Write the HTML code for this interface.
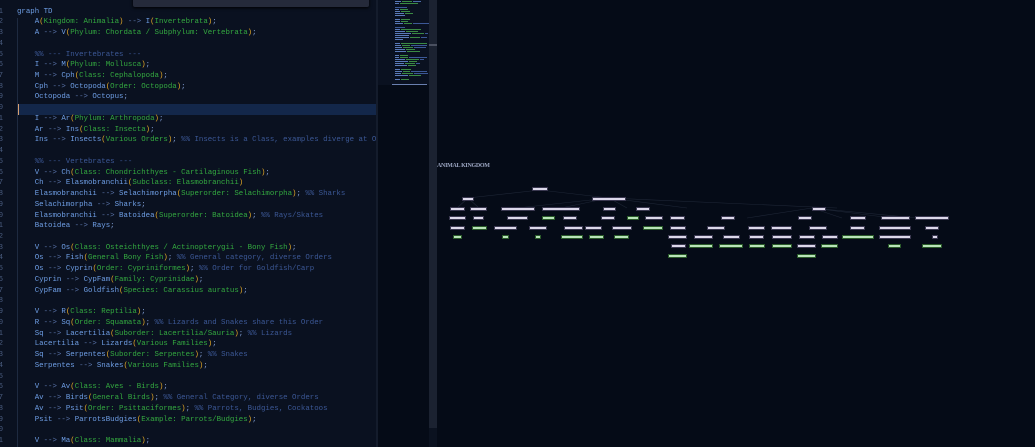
<!DOCTYPE html>
<html><head><meta charset="utf-8"><style>
*{margin:0;padding:0;box-sizing:border-box}
body{width:1035px;height:447px;overflow:hidden;background:#050b17;position:relative;font-family:"Liberation Mono",monospace}
#ed{position:absolute;left:0;top:0;width:376px;height:447px;background:#0a1120;overflow:hidden}
#hl{position:absolute;left:17px;top:104px;width:359px;height:10.5px;background:#13274a}
#cur{position:absolute;left:17px;top:104px;width:2px;height:10.5px;background:#d9a070}
#guide{position:absolute;left:17px;top:18px;width:1px;height:429px;background:#1e2a40}
.ln{position:absolute;left:-13px;width:16px;text-align:right;font-size:7.33px;color:#4b5d80;line-height:10.73px}
.code{position:absolute;left:17px;top:6.6px;font-size:7.4px;line-height:10.73px;white-space:pre;color:#7fa3dd}
.i{color:#6f9fe6}.a{color:#5c76ad}.p{color:#e4a826}.g{color:#34aa40}.c{color:#3c5896}.t{color:#7f9bd0}
#bd{position:absolute;left:376px;top:0;width:2px;height:447px;background:#141c2c}
#mm{position:absolute;left:378px;top:0;width:51px;height:447px;background:#050b17}
#sb{position:absolute;left:429px;top:0;width:8px;height:447px;background:#1b2231}
#sb2{position:absolute;left:429px;top:428px;width:8px;height:19px;background:#0b1220}
#find{position:absolute;left:133px;top:-4px;width:236px;height:11px;background:#252a3a;border-radius:2px;box-shadow:0 1px 3px #000}
.mr{position:absolute;left:14px;height:1px;display:flex;gap:1px}
.mr b{display:block;height:1px}
.n{position:absolute;height:4px;background:#dcd8ea;border:0.5px solid #3a3850}
.n.gr{background:#b8e4b8;border-color:#2a5a2a}
</style></head><body>
<div id="ed">
<div id="hl"></div><div id="cur"></div><div id="guide"></div>
<div class="ln" style="top:6.6px">1<br>2<br>3<br>4<br>5<br>6<br>7<br>8<br>9<br>0<br>1<br>2<br>3<br>4<br>5<br>6<br>7<br>8<br>9<br>0<br>1<br>2<br>3<br>4<br>5<br>6<br>7<br>8<br>9<br>0<br>1<br>2<br>3<br>4<br>5<br>6<br>7<br>8<br>9<br>0<br>1</div>
<div class="code"><span class="i">graph TD</span>
    <span class="i">A</span><span class="p">(</span><span class="g">Kingdom: Animalia</span><span class="p">)</span> <span class="a">--&gt;</span> <span class="i">I</span><span class="p">(</span><span class="g">Invertebrata</span><span class="p">)</span><span class="t">;</span>
    <span class="i">A</span> <span class="a">--&gt;</span> <span class="i">V</span><span class="p">(</span><span class="g">Phylum: Chordata / Subphylum: Vertebrata</span><span class="p">)</span><span class="t">;</span>

    <span class="c">%% --- Invertebrates ---</span>
    <span class="i">I</span> <span class="a">--&gt;</span> <span class="i">M</span><span class="p">(</span><span class="g">Phylum: Mollusca</span><span class="p">)</span><span class="t">;</span>
    <span class="i">M</span> <span class="a">--&gt;</span> <span class="i">Cph</span><span class="p">(</span><span class="g">Class: Cephalopoda</span><span class="p">)</span><span class="t">;</span>
    <span class="i">Cph</span> <span class="a">--&gt;</span> <span class="i">Octopoda</span><span class="p">(</span><span class="g">Order: Octopoda</span><span class="p">)</span><span class="t">;</span>
    <span class="i">Octopoda</span> <span class="a">--&gt;</span> <span class="i">Octopus</span><span class="t">;</span>

    <span class="i">I</span> <span class="a">--&gt;</span> <span class="i">Ar</span><span class="p">(</span><span class="g">Phylum: Arthropoda</span><span class="p">)</span><span class="t">;</span>
    <span class="i">Ar</span> <span class="a">--&gt;</span> <span class="i">Ins</span><span class="p">(</span><span class="g">Class: Insecta</span><span class="p">)</span><span class="t">;</span>
    <span class="i">Ins</span> <span class="a">--&gt;</span> <span class="i">Insects</span><span class="p">(</span><span class="g">Various Orders</span><span class="p">)</span><span class="t">;</span> <span class="c">%% Insects is a Class, examples diverge at Orders</span>

    <span class="c">%% --- Vertebrates ---</span>
    <span class="i">V</span> <span class="a">--&gt;</span> <span class="i">Ch</span><span class="p">(</span><span class="g">Class: Chondrichthyes - Cartilaginous Fish</span><span class="p">)</span><span class="t">;</span>
    <span class="i">Ch</span> <span class="a">--&gt;</span> <span class="i">Elasmobranchii</span><span class="p">(</span><span class="g">Subclass: Elasmobranchii</span><span class="p">)</span>
    <span class="i">Elasmobranchii</span> <span class="a">--&gt;</span> <span class="i">Selachimorpha</span><span class="p">(</span><span class="g">Superorder: Selachimorpha</span><span class="p">)</span><span class="t">;</span> <span class="c">%% Sharks</span>
    <span class="i">Selachimorpha</span> <span class="a">--&gt;</span> <span class="i">Sharks</span><span class="t">;</span>
    <span class="i">Elasmobranchii</span> <span class="a">--&gt;</span> <span class="i">Batoidea</span><span class="p">(</span><span class="g">Superorder: Batoidea</span><span class="p">)</span><span class="t">;</span> <span class="c">%% Rays/Skates</span>
    <span class="i">Batoidea</span> <span class="a">--&gt;</span> <span class="i">Rays</span><span class="t">;</span>

    <span class="i">V</span> <span class="a">--&gt;</span> <span class="i">Os</span><span class="p">(</span><span class="g">Class: Osteichthyes / Actinopterygii - Bony Fish</span><span class="p">)</span><span class="t">;</span>
    <span class="i">Os</span> <span class="a">--&gt;</span> <span class="i">Fish</span><span class="p">(</span><span class="g">General Bony Fish</span><span class="p">)</span><span class="t">;</span> <span class="c">%% General category, diverse Orders</span>
    <span class="i">Os</span> <span class="a">--&gt;</span> <span class="i">Cyprin</span><span class="p">(</span><span class="g">Order: Cypriniformes</span><span class="p">)</span><span class="t">;</span> <span class="c">%% Order for Goldfish/Carp</span>
    <span class="i">Cyprin</span> <span class="a">--&gt;</span> <span class="i">CypFam</span><span class="p">(</span><span class="g">Family: Cyprinidae</span><span class="p">)</span><span class="t">;</span>
    <span class="i">CypFam</span> <span class="a">--&gt;</span> <span class="i">Goldfish</span><span class="p">(</span><span class="g">Species: Carassius auratus</span><span class="p">)</span><span class="t">;</span>

    <span class="i">V</span> <span class="a">--&gt;</span> <span class="i">R</span><span class="p">(</span><span class="g">Class: Reptilia</span><span class="p">)</span><span class="t">;</span>
    <span class="i">R</span> <span class="a">--&gt;</span> <span class="i">Sq</span><span class="p">(</span><span class="g">Order: Squamata</span><span class="p">)</span><span class="t">;</span> <span class="c">%% Lizards and Snakes share this Order</span>
    <span class="i">Sq</span> <span class="a">--&gt;</span> <span class="i">Lacertilia</span><span class="p">(</span><span class="g">Suborder: Lacertilia/Sauria</span><span class="p">)</span><span class="t">;</span> <span class="c">%% Lizards</span>
    <span class="i">Lacertilia</span> <span class="a">--&gt;</span> <span class="i">Lizards</span><span class="p">(</span><span class="g">Various Families</span><span class="p">)</span><span class="t">;</span>
    <span class="i">Sq</span> <span class="a">--&gt;</span> <span class="i">Serpentes</span><span class="p">(</span><span class="g">Suborder: Serpentes</span><span class="p">)</span><span class="t">;</span> <span class="c">%% Snakes</span>
    <span class="i">Serpentes</span> <span class="a">--&gt;</span> <span class="i">Snakes</span><span class="p">(</span><span class="g">Various Families</span><span class="p">)</span><span class="t">;</span>

    <span class="i">V</span> <span class="a">--&gt;</span> <span class="i">Av</span><span class="p">(</span><span class="g">Class: Aves - Birds</span><span class="p">)</span><span class="t">;</span>
    <span class="i">Av</span> <span class="a">--&gt;</span> <span class="i">Birds</span><span class="p">(</span><span class="g">General Birds</span><span class="p">)</span><span class="t">;</span> <span class="c">%% General Category, diverse Orders</span>
    <span class="i">Av</span> <span class="a">--&gt;</span> <span class="i">Psit</span><span class="p">(</span><span class="g">Order: Psittaciformes</span><span class="p">)</span><span class="t">;</span> <span class="c">%% Parrots, Budgies, Cockatoos</span>
    <span class="i">Psit</span> <span class="a">--&gt;</span> <span class="i">ParrotsBudgies</span><span class="p">(</span><span class="g">Example: Parrots/Budgies</span><span class="p">)</span><span class="t">;</span>

    <span class="i">V</span> <span class="a">--&gt;</span> <span class="i">Ma</span><span class="p">(</span><span class="g">Class: Mammalia</span><span class="p">)</span><span class="t">;</span></div>
</div>
<div id="find"></div>
<div id="bd"></div>
<div id="mm">
<div style="position:absolute;left:0;top:0;width:51px;height:85px;background:#0a1120"></div>
<div class="mr" style="top:1px;left:17px"><b style="width:6px;background:#5a7ab8"></b><b style="width:10px;background:#3a8a44"></b><b style="width:8px;background:#4a6aa8"></b></div>
<div class="mr" style="top:3px;left:17px"><b style="width:4px;background:#5a7ab8"></b><b style="width:18px;background:#3a8a44"></b></div>
<div class="mr" style="top:7px;left:17px"><b style="width:12px;background:#3c5896"></b></div>
<div class="mr" style="top:9px;left:17px"><b style="width:4px;background:#5a7ab8"></b><b style="width:8px;background:#3a8a44"></b></div>
<div class="mr" style="top:11px;left:17px"><b style="width:5px;background:#5a7ab8"></b><b style="width:9px;background:#3a8a44"></b></div>
<div class="mr" style="top:13px;left:17px"><b style="width:9px;background:#5a7ab8"></b><b style="width:8px;background:#3a8a44"></b></div>
<div class="mr" style="top:15px;left:17px"><b style="width:10px;background:#5a7ab8"></b></div>
<div class="mr" style="top:19px;left:17px"><b style="width:5px;background:#5a7ab8"></b><b style="width:9px;background:#3a8a44"></b></div>
<div class="mr" style="top:21px;left:17px"><b style="width:5px;background:#5a7ab8"></b><b style="width:7px;background:#3a8a44"></b></div>
<div class="mr" style="top:23px;left:17px"><b style="width:8px;background:#5a7ab8"></b><b style="width:8px;background:#3a8a44"></b><b style="width:17px;background:#3c5896"></b></div>
<div class="mr" style="top:27px;left:17px"><b style="width:10px;background:#3c5896"></b></div>
<div class="mr" style="top:29px;left:17px"><b style="width:5px;background:#5a7ab8"></b><b style="width:20px;background:#3a8a44"></b></div>
<div class="mr" style="top:31px;left:17px"><b style="width:10px;background:#5a7ab8"></b><b style="width:12px;background:#3a8a44"></b></div>
<div class="mr" style="top:33px;left:17px"><b style="width:16px;background:#5a7ab8"></b><b style="width:12px;background:#3a8a44"></b><b style="width:3px;background:#3c5896"></b></div>
<div class="mr" style="top:35px;left:17px"><b style="width:14px;background:#5a7ab8"></b></div>
<div class="mr" style="top:37px;left:17px"><b style="width:14px;background:#5a7ab8"></b><b style="width:10px;background:#3a8a44"></b><b style="width:6px;background:#3c5896"></b></div>
<div class="mr" style="top:39px;left:17px"><b style="width:8px;background:#5a7ab8"></b></div>
<div class="mr" style="top:43px;left:17px"><b style="width:5px;background:#5a7ab8"></b><b style="width:26px;background:#3a8a44"></b></div>
<div class="mr" style="top:45px;left:17px"><b style="width:6px;background:#5a7ab8"></b><b style="width:8px;background:#3a8a44"></b><b style="width:16px;background:#3c5896"></b></div>
<div class="mr" style="top:47px;left:17px"><b style="width:7px;background:#5a7ab8"></b><b style="width:10px;background:#3a8a44"></b><b style="width:12px;background:#3c5896"></b></div>
<div class="mr" style="top:49px;left:17px"><b style="width:10px;background:#5a7ab8"></b><b style="width:9px;background:#3a8a44"></b></div>
<div class="mr" style="top:51px;left:17px"><b style="width:11px;background:#5a7ab8"></b><b style="width:13px;background:#3a8a44"></b></div>
<div class="mr" style="top:55px;left:17px"><b style="width:4px;background:#5a7ab8"></b><b style="width:8px;background:#3a8a44"></b></div>
<div class="mr" style="top:57px;left:17px"><b style="width:4px;background:#5a7ab8"></b><b style="width:8px;background:#3a8a44"></b><b style="width:18px;background:#3c5896"></b></div>
<div class="mr" style="top:59px;left:17px"><b style="width:10px;background:#5a7ab8"></b><b style="width:13px;background:#3a8a44"></b><b style="width:4px;background:#3c5896"></b></div>
<div class="mr" style="top:61px;left:17px"><b style="width:13px;background:#5a7ab8"></b><b style="width:8px;background:#3a8a44"></b></div>
<div class="mr" style="top:63px;left:17px"><b style="width:9px;background:#5a7ab8"></b><b style="width:10px;background:#3a8a44"></b><b style="width:4px;background:#3c5896"></b></div>
<div class="mr" style="top:65px;left:17px"><b style="width:12px;background:#5a7ab8"></b><b style="width:8px;background:#3a8a44"></b></div>
<div class="mr" style="top:69px;left:17px"><b style="width:5px;background:#5a7ab8"></b><b style="width:10px;background:#3a8a44"></b></div>
<div class="mr" style="top:71px;left:17px"><b style="width:7px;background:#5a7ab8"></b><b style="width:7px;background:#3a8a44"></b><b style="width:16px;background:#3c5896"></b></div>
<div class="mr" style="top:73px;left:17px"><b style="width:6px;background:#5a7ab8"></b><b style="width:11px;background:#3a8a44"></b><b style="width:14px;background:#3c5896"></b></div>
<div class="mr" style="top:75px;left:17px"><b style="width:13px;background:#5a7ab8"></b><b style="width:12px;background:#3a8a44"></b></div>
<div class="mr" style="top:79px;left:17px"><b style="width:5px;background:#5a7ab8"></b><b style="width:8px;background:#3a8a44"></b></div>
<div style="position:absolute;left:14px;top:84px;width:35px;height:1px;background:#6a80b0"></div>
</div>
<div id="sb"></div>
<div style="position:absolute;left:429px;top:44px;width:8px;height:2px;background:#4a5060"></div>
<div id="sb2"></div>
<div style="position:absolute;left:437px;top:163px;font-size:6px;color:#9aa4c0;font-weight:bold;letter-spacing:-0.3px;font-family:'Liberation Serif',serif">ANIMAL KINGDOM</div>
<svg style="position:absolute;left:437px;top:180px" width="520" height="90"><g stroke="#1e2636" stroke-width="0.6" fill="none">
<path d="M103 10 L31 18 M103 10 L172 18 M172 18 L250 28 M172 18 L400 28 M31 18 L20 28 M31 18 L42 28 M172 18 L80 28 M172 18 L124 28 M172 18 L190 28 M375 28 L310 38 M375 28 L405 38 M375 28 L455 38 M375 28 L480 38"/>
</g></svg>
<div class="n" style="left:532px;top:187px;width:16px"></div>
<div class="n" style="left:462px;top:197px;width:12px"></div>
<div class="n" style="left:592px;top:197px;width:34px"></div>
<div class="n" style="left:812px;top:207px;width:14px"></div>
<div class="n" style="left:450px;top:207px;width:15px"></div>
<div class="n" style="left:470px;top:207px;width:17px"></div>
<div class="n" style="left:501px;top:207px;width:34px"></div>
<div class="n" style="left:542px;top:207px;width:38px"></div>
<div class="n" style="left:603px;top:207px;width:13px"></div>
<div class="n" style="left:636px;top:207px;width:14px"></div>
<div class="n" style="left:449px;top:216px;width:17px"></div>
<div class="n" style="left:473px;top:216px;width:11px"></div>
<div class="n" style="left:507px;top:216px;width:21px"></div>
<div class="n gr" style="left:542px;top:216px;width:13px"></div>
<div class="n" style="left:563px;top:216px;width:14px"></div>
<div class="n" style="left:601px;top:216px;width:14px"></div>
<div class="n gr" style="left:627px;top:216px;width:12px"></div>
<div class="n" style="left:645px;top:216px;width:18px"></div>
<div class="n" style="left:670px;top:216px;width:15px"></div>
<div class="n" style="left:721px;top:216px;width:14px"></div>
<div class="n" style="left:798px;top:216px;width:14px"></div>
<div class="n" style="left:850px;top:216px;width:16px"></div>
<div class="n" style="left:881px;top:216px;width:29px"></div>
<div class="n" style="left:915px;top:216px;width:34px"></div>
<div class="n" style="left:450px;top:226px;width:15px"></div>
<div class="n gr" style="left:472px;top:226px;width:15px"></div>
<div class="n" style="left:494px;top:226px;width:23px"></div>
<div class="n" style="left:529px;top:226px;width:18px"></div>
<div class="n" style="left:564px;top:226px;width:19px"></div>
<div class="n" style="left:585px;top:226px;width:17px"></div>
<div class="n" style="left:612px;top:226px;width:20px"></div>
<div class="n gr" style="left:643px;top:226px;width:20px"></div>
<div class="n" style="left:670px;top:226px;width:16px"></div>
<div class="n" style="left:707px;top:226px;width:18px"></div>
<div class="n" style="left:748px;top:226px;width:17px"></div>
<div class="n" style="left:771px;top:226px;width:21px"></div>
<div class="n" style="left:809px;top:226px;width:18px"></div>
<div class="n" style="left:850px;top:226px;width:15px"></div>
<div class="n" style="left:879px;top:226px;width:32px"></div>
<div class="n" style="left:925px;top:226px;width:14px"></div>
<div class="n gr" style="left:453px;top:235px;width:9px"></div>
<div class="n gr" style="left:502px;top:235px;width:7px"></div>
<div class="n gr" style="left:535px;top:235px;width:6px"></div>
<div class="n gr" style="left:561px;top:235px;width:22px"></div>
<div class="n gr" style="left:589px;top:235px;width:15px"></div>
<div class="n gr" style="left:614px;top:235px;width:15px"></div>
<div class="n" style="left:668px;top:235px;width:19px"></div>
<div class="n" style="left:694px;top:235px;width:19px"></div>
<div class="n" style="left:723px;top:235px;width:17px"></div>
<div class="n" style="left:749px;top:235px;width:15px"></div>
<div class="n" style="left:772px;top:235px;width:20px"></div>
<div class="n" style="left:799px;top:235px;width:16px"></div>
<div class="n" style="left:822px;top:235px;width:16px"></div>
<div class="n gr" style="left:842px;top:235px;width:32px"></div>
<div class="n" style="left:879px;top:235px;width:32px"></div>
<div class="n" style="left:932px;top:235px;width:6px"></div>
<div class="n" style="left:671px;top:244px;width:15px"></div>
<div class="n gr" style="left:689px;top:244px;width:24px"></div>
<div class="n gr" style="left:719px;top:244px;width:24px"></div>
<div class="n gr" style="left:749px;top:244px;width:16px"></div>
<div class="n gr" style="left:772px;top:244px;width:20px"></div>
<div class="n" style="left:797px;top:244px;width:19px"></div>
<div class="n gr" style="left:821px;top:244px;width:17px"></div>
<div class="n gr" style="left:888px;top:244px;width:13px"></div>
<div class="n gr" style="left:922px;top:244px;width:20px"></div>
<div class="n gr" style="left:668px;top:254px;width:19px"></div>
<div class="n gr" style="left:797px;top:254px;width:19px"></div>
</body></html>
